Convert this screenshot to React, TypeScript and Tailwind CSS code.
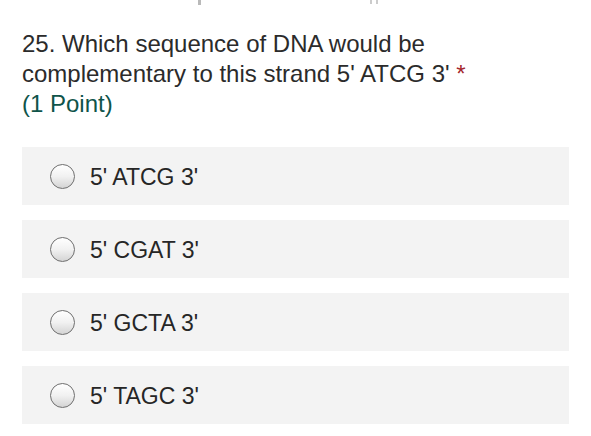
import React from "react";

const options = ["5' ATCG 3'", "5' CGAT 3'", "5' GCTA 3'", "5' TAGC 3'"];

function Radio() {
  return (
    <span className="shrink-0 w-[25px] h-[25px] rounded-full border-[1.5px] border-[#6f6f6f] bg-gradient-to-b from-[#ffffff] via-[#f1f1f1] to-[#d4d4d4]" />
  );
}

export default function App() {
  return (
    <div
      className="w-[591px] h-[436px] bg-white overflow-hidden"
      style={{ fontFamily: "'Liberation Sans', Arial, sans-serif" }}
    >
      <div className="flex h-[6px] items-start">
        <span className="ml-[198px] w-[3px] h-[5px] bg-[#8a8a8a] opacity-60" />
        <span className="ml-[169px] w-[2px] h-[4px] bg-[#9a9a9a] opacity-50" />
        <span className="ml-[4px] w-[2px] h-[4px] bg-[#9a9a9a] opacity-50" />
      </div>
      <div className="px-[22px] pt-[23px]">
        <div className="text-[24px] leading-[30px] text-[#2b2b2b]">
          <div>25. Which sequence of DNA would be</div>
          <div>
            complementary to this strand 5' ATCG 3'{" "}
            <span className="text-[#a4262c]">*</span>
          </div>
          <div className="text-[#0f544a]">(1 Point)</div>
        </div>
        <div className="mt-[28px] flex flex-col gap-[15px] w-[547px]">
          {options.map((o) => (
            <div
              key={o}
              className="h-[58px] bg-[#f3f3f3] flex items-center pl-[28px] gap-[15px]"
            >
              <Radio />
              <span className="text-[23px] leading-none text-[#262626] pt-[3px]">
                {o}
              </span>
            </div>
          ))}
        </div>
      </div>
    </div>
  );
}
